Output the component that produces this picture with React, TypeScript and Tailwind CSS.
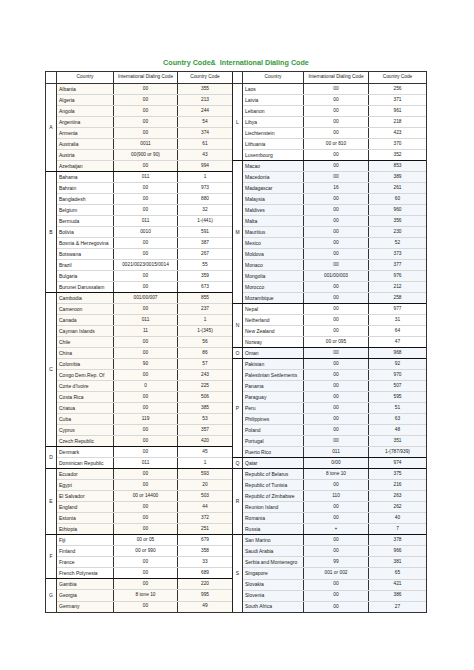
import React from "react";

type Row = [string, string, string];
type Group = { letter: string; bg: string; rows: Row[] };

const left: Group[] = [
  { letter: "A", bg: "bg-[#fcf8f2]", rows: [
    ["Albania", "00", "355"], ["Algeria", "00", "213"], ["Angola", "00", "244"], ["Argentina", "00", "54"],
    ["Armenia", "00", "374"], ["Australia", "0011", "61"], ["Austria", "00(900 or 90)", "43"], ["Azerbaijan", "00", "994"],
  ]},
  { letter: "B", bg: "bg-white", rows: [
    ["Bahama", "011", "1"], ["Bahrain", "00", "973"], ["Bangladesh", "00", "880"], ["Belgium", "00", "32"],
    ["Bermuda", "011", "1-(441)"], ["Bolivia", "0010", "591"], ["Bosnia & Herzegovina", "00", "387"], ["Botswana", "00", "267"],
    ["Brazil", "0021/0023/0015/0014", "55"], ["Bulgaria", "00", "359"], ["Burunei Darussalam", "00", "673"],
  ]},
  { letter: "C", bg: "bg-[#fcf8f2]", rows: [
    ["Cambodia", "001/00/007", "855"], ["Cameroon", "00", "237"], ["Canada", "011", "1"], ["Cayman Islands", "11", "1-(345)"],
    ["Chile", "00", "56"], ["China", "00", "86"], ["Colombia", "90", "57"], ["Congo Dem.Rep. Of", "00", "243"],
    ["Corte d'Ivoire", "0", "225"], ["Costa Rica", "00", "506"], ["Criatua", "00", "385"], ["Cuba", "119", "53"],
    ["Cyprus", "00", "357"], ["Czech Republic", "00", "420"],
  ]},
  { letter: "D", bg: "bg-white", rows: [["Denmark", "00", "45"], ["Dominican Republic", "011", "1"]] },
  { letter: "E", bg: "bg-[#fcf8f2]", rows: [
    ["Ecuador", "00", "593"], ["Egypt", "00", "20"], ["El Salvador", "00 or 14400", "503"], ["England", "00", "44"],
    ["Estonia", "00", "372"], ["Ethiopia", "00", "251"],
  ]},
  { letter: "F", bg: "bg-white", rows: [
    ["Fiji", "00 or 05", "679"], ["Finland", "00 or 990", "358"], ["France", "00", "33"], ["French Polynesia", "00", "689"],
  ]},
  { letter: "G", bg: "bg-[#fcf8f2]", rows: [["Gambia", "00", "220"], ["Georgia", "8 tone 10", "995"], ["Germany", "00", "49"]] },
];

const right: Group[] = [
  { letter: "L", bg: "bg-white", rows: [
    ["Laos", "00", "256"], ["Latvia", "00", "371"], ["Lebanon", "00", "961"], ["Libya", "00", "218"],
    ["Liechtenstein", "00", "423"], ["Lithuania", "00 or 810", "370"], ["Luxembourg", "00", "352"],
  ]},
  { letter: "M", bg: "bg-[#f3f7fb]", rows: [
    ["Macao", "00", "853"], ["Macedonia", "00", "389"], ["Madagascar", "16", "261"], ["Malaysia", "00", "60"],
    ["Maldives", "00", "960"], ["Malta", "00", "356"], ["Mauritius", "00", "230"], ["Mexico", "00", "52"],
    ["Moldova", "00", "373"], ["Monaco", "00", "377"], ["Mongolia", "001/00/003", "976"], ["Morocco", "00", "212"],
    ["Mozambique", "00", "258"],
  ]},
  { letter: "N", bg: "bg-white", rows: [
    ["Nepal", "00", "977"], ["Netherland", "00", "31"], ["New Zealand", "00", "64"], ["Norway", "00 or 095", "47"],
  ]},
  { letter: "O", bg: "bg-[#f3f7fb]", rows: [["Oman", "00", "968"]] },
  { letter: "P", bg: "bg-[#f3f7fb]", rows: [
    ["Pakistan", "00", "92"], ["Palestinian Settlements", "00", "970"], ["Panama", "00", "507"], ["Paraguay", "00", "595"],
    ["Peru", "00", "51"], ["Philippines", "00", "63"], ["Poland", "00", "48"], ["Portugal", "00", "351"],
    ["Puerto Rico", "011", "1-(787/939)"],
  ]},
  { letter: "Q", bg: "bg-[#f3f7fb]", rows: [["Qatar", "0/00", "974"]] },
  { letter: "R", bg: "bg-[#f3f7fb]", rows: [
    ["Republic of Belarus", "8 tone 10", "375"], ["Republic of Tunisia", "00", "216"], ["Republic of Zimbabwe", "110", "263"],
    ["Reunion Island", "00", "262"], ["Romania", "00", "40"], ["Russia", "+", "7"],
  ]},
  { letter: "S", bg: "bg-[#f3f7fb]", rows: [
    ["San Marino", "00", "378"], ["Saudi Arabia", "00", "966"], ["Serbia and Montenegro", "99", "381"],
    ["Singapore", "001 or 002", "65"], ["Slovakia", "00", "421"], ["Slovenia", "00", "386"], ["South Africa", "00", "27"],
  ]},
];

type Widths = { l: string; c: string; i: string; k: string };

function Table({ groups, w, side }: { groups: Group[]; w: Widths; side: "left" | "right" }) {
  return (
    <div className={side === "left" ? "flex flex-col border-r-[1.5px] border-[#222]" : "flex flex-col"}>
      <div className="flex h-[12px] border-b border-[#333] text-[4.8px]">
        <div className={`${w.l} shrink-0 border-r border-[#333]`} />
        <div className={`${w.c} shrink-0 border-r border-[#333] flex items-center justify-center`}>Country</div>
        <div className={`${w.i} shrink-0 border-r border-[#333] flex items-center justify-center whitespace-nowrap`}>International Dialing Code</div>
        <div className={`${w.k} shrink-0 flex items-center justify-center whitespace-nowrap`}>Country Code</div>
      </div>
      {groups.map((g, gi) => (
        <div
          key={g.letter}
          className={gi === groups.length - 1 ? "flex" : "flex border-b-[1.5px] border-[#111]"}
          style={{ height: g.rows.length * 11 }}
        >
          <div className={`${w.l} shrink-0 bg-white border-r border-[#333] flex items-center justify-center text-[5px]`}>
            {g.letter}
          </div>
          <div className={`flex-1 flex flex-col ${g.bg}`}>
            {g.rows.map((r, ri) => (
              <div
                key={r[0]}
                className={ri === g.rows.length - 1 ? "flex flex-1 min-h-0" : "flex flex-1 min-h-0 border-b border-[#d8d8d8]"}
              >
                <div className={`${w.c} shrink-0 border-r-[1.2px] border-[#333] flex items-center pl-[2px] whitespace-nowrap overflow-hidden text-[5px]`}>{r[0]}</div>
                <div className={`${w.i} shrink-0 border-r-[1.2px] border-[#333] flex items-center justify-center whitespace-nowrap`}>{r[1]}</div>
                <div className={`${w.k} shrink-0 flex items-center justify-center whitespace-nowrap`}>{r[2]}</div>
              </div>
            ))}
          </div>
        </div>
      ))}
    </div>
  );
}

export default function App() {
  return (
    <div className="w-[474px] h-[670px] bg-white text-[#222]" style={{ fontFamily: '"Liberation Sans", Arial, sans-serif' }}>
      <div className="pt-[58px] h-[71px] w-[382px] ml-[45px] text-center">
        <div className="text-[7.2px] leading-[9px] font-bold text-[#36993a] whitespace-pre">Country Code&  International Dialing Code</div>
      </div>
      <div className="ml-[45px] w-[382px] flex border border-[#333] text-[4.8px] leading-none">
        <Table side="left" groups={left} w={{ l: "w-[11px]", c: "w-[57px]", i: "w-[64px]", k: "w-[54px]" }} />
        <Table side="right" groups={right} w={{ l: "w-[10px]", c: "w-[61px]", i: "w-[65px]", k: "w-[57px]" }} />
      </div>
    </div>
  );
}
